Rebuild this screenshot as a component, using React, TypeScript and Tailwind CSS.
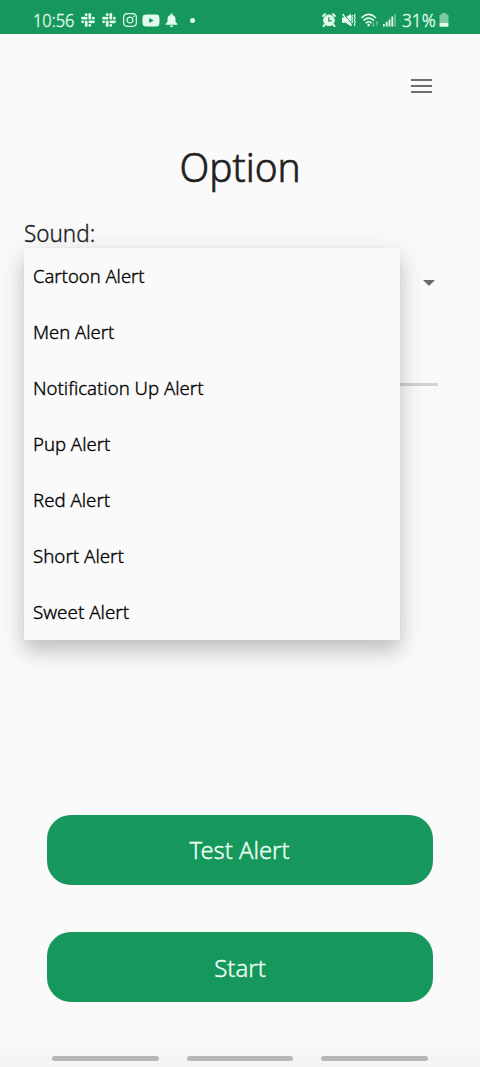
import React from "react";
import { FaInstagram, FaYoutube } from "react-icons/fa";

const alerts = [
  { name: "Cartoon Alert", scale: "scale-x-[0.97]" },
  { name: "Men Alert", scale: "scale-x-[0.97]" },
  { name: "Notification Up Alert", scale: "scale-x-[0.978]" },
  { name: "Pup Alert", scale: "scale-x-[0.975]" },
  { name: "Red Alert", scale: "scale-x-[0.98]" },
  { name: "Short Alert", scale: "scale-x-[0.985]" },
  { name: "Sweet Alert", scale: "scale-x-[0.99]" },
];

function Slack() {
  return (
    <svg viewBox="0 0 14 14" className="h-[14px] w-[14px]" fill="none" stroke="currentColor" strokeWidth="2.8" strokeLinecap="round">
      <path d="M5.2 5.2H1.5M5.2 1.6v.1M8.8 1.5v3.7M12.3 5.2h.1M8.8 8.8h3.7M8.8 12.3v.1M5.2 12.5V8.8M1.6 8.8h.1" />
    </svg>
  );
}

function Alarm() {
  return (
    <svg viewBox="0 0 14 14" className="h-[14px] w-[14px]" fill="none" stroke="currentColor" strokeLinecap="round">
      <circle cx="7" cy="7.3" r="5.4" fill="currentColor" />
      <path d="M1.1 3 3 1.1M12.9 3 11 1.1M2.6 11.8l-1 1.3M11.4 11.8l1 1.3" strokeWidth="2" />
      <path d="M6.8 4.6v3.2h2.6" stroke="#16985c" strokeWidth="1.2" />
    </svg>
  );
}

function Muted() {
  return (
    <svg viewBox="0 0 14 14" className="h-[14px] w-[14px]" fill="currentColor">
      <path d="M0 4.5h3.5L9 .8v12.4L3.5 9.8H0z" />
      <path d="M1.2.4 11 12" stroke="#16985c" strokeWidth="1" />
      <path d="M.5 1 9.6 12.6" stroke="currentColor" strokeWidth="1.5" />
      <path d="m10.6 2-.9 1.7.9 1.6-.9 1.7.9 1.6-.9 1.7M13.2 1l-.9 2 .9 2-.9 2 .9 2-.9 2 .9 2" fill="none" stroke="currentColor" strokeWidth="1.1" />
    </svg>
  );
}

function Wifi() {
  return (
    <svg viewBox="0 0 18 14" className="h-[14px] w-[18px]" fill="none" stroke="currentColor" strokeWidth="1.6" strokeLinecap="round">
      <path d="M.9 4.5q6.8-6.3 13.6 0M3 7.2q4.7-4.2 9.4 0M5.3 9.8q2.4-2.1 4.8 0" />
      <circle cx="7.7" cy="12.1" r="1.3" fill="currentColor" stroke="none" />
      <path d="M12.5 9.5V13m0 0-1-1m1 1 1-1M16 12.5V9m0 0-1 1m1-1 1 1" strokeWidth="1" opacity=".4" />
    </svg>
  );
}

function Signal() {
  return (
    <svg viewBox="0 0 13 14" className="h-[14px] w-[13px]" fill="currentColor">
      <path d="M0 11h1.8v2.5H0zM2.8 8.8h1.8v4.7H2.8zM5.6 6.4h1.8v7.1H5.6zM8.4 3.6h1.8v9.9H8.4z" />
      <path d="M11.1 1h1.8v12.5h-1.8z" opacity=".4" />
    </svg>
  );
}

function Bell() {
  return (
    <svg viewBox="0 0 13 15" className="h-[15px] w-[13px]" fill="currentColor">
      <path d="M6.5.3a1 1 0 0 1 1 1v.6c2 .5 3 2 3 4v2.8l2 2.2v.8H.5v-.8l2-2.2V5.9c0-2 1-3.5 3-4v-.6a1 1 0 0 1 1-1zM4.9 12.6h3.2a1.6 1.6 0 0 1-3.2 0z" />
    </svg>
  );
}

function Battery() {
  return (
    <svg viewBox="0 0 10 14" className="h-[14px] w-[10px]" fill="currentColor">
      <path d="M3 0h4v1.5h1.5a1 1 0 0 1 1 1V10h-9V2.5a1 1 0 0 1 1-1H3z" opacity=".5" />
      <path d="M.5 10h9v2.8a1 1 0 0 1-1 1h-7a1 1 0 0 1-1-1z" />
    </svg>
  );
}

function StatusBar() {
  return (
    <header className="flex h-[33.5px] shrink-0 items-center bg-[#16985c] pt-[7px] text-[#e2fbec]">
      <div className="ml-[33px] w-[48px] text-[18px] leading-[26px]">
        <span className="inline-block origin-left scale-x-[0.91]">10:56</span>
      </div>
      <div className="flex items-center">
        <Slack />
        <span className="ml-[7px]"><Slack /></span>
        <FaInstagram className="ml-[6px] h-[16px] w-[16px]" />
        <FaYoutube className="ml-[4px] h-[17px] w-[18px]" />
        <span className="ml-[5px]"><Bell /></span>
        <span className="ml-[12px] h-[5px] w-[5px] rounded-full bg-current" />
      </div>
      <div className="mr-[31px] ml-auto flex items-center">
        <Alarm />
        <span className="ml-[6px]"><Muted /></span>
        <span className="ml-[5px]"><Wifi /></span>
        <span className="ml-[4px]"><Signal /></span>
        <div className="ml-[6px] w-[37px] text-[18px] leading-[26px]">
          <span className="inline-block origin-left scale-x-[0.96]">31%</span>
        </div>
        <Battery />
      </div>
    </header>
  );
}

export default function App() {
  return (
    <div className="flex h-[1067px] w-[480px] flex-col overflow-hidden bg-[#fafafa] font-['Noto_Sans',sans-serif] font-light text-[#212121] [-webkit-text-stroke:0.35px]">
      <StatusBar />
      <main className="flex flex-1 flex-col">
        <div className="flex justify-end pt-[45.5px] pr-[48px]">
          <button aria-label="Menu" className="flex w-[21px] flex-col gap-[4px]">
            <span className="h-[2px] bg-[#6e6e6e]" />
            <span className="h-[2px] bg-[#6e6e6e]" />
            <span className="h-[2px] bg-[#6e6e6e]" />
          </button>
        </div>
        <h1 className="mt-[49px] text-center text-[41px] leading-[48px] [-webkit-text-stroke:0.7px]">
          <span className="inline-block scale-x-[0.945]">Option</span>
        </h1>
        <section className="relative mt-[26.5px] h-[440px] pl-[23.5px]">
          <h2 className="text-[24px] leading-[31px]">
            <span className="inline-block origin-left scale-x-[0.935]">Sound:</span>
          </h2>
          <div className="mt-[32px] mr-[45px] flex justify-end">
            <svg viewBox="0 0 12 6" className="h-[6px] w-[12px]" fill="#6a6a6a"><path d="M0 0h12L6 6z" /></svg>
          </div>
          <div className="mt-[97px] mr-[42px] h-[3px] bg-[#d2d2d2]" />
          <ul className="absolute top-[31.5px] left-[23.5px] w-[376.5px] bg-[#fafafa] text-black shadow-[0_8px_28px_rgba(0,0,0,0.14),0_12px_16px_rgba(0,0,0,0.12),0_0_1px_rgba(0,0,0,0.1)]">
            {alerts.map((a) => (
              <li key={a.name} className="flex h-14 items-center pl-[9.5px] text-[19px]">
                <span className={"origin-left " + a.scale}>{a.name}</span>
              </li>
            ))}
          </ul>
        </section>
        <div className="mx-[47px] mt-auto mb-[47px] flex flex-col gap-[47.5px] text-[24px] text-[#effff5]">
          <button className="h-[70px] rounded-[24px] bg-[#16985c] pt-px">
            <span className="inline-block scale-x-[0.99]">Test Alert</span>
          </button>
          <button className="h-[70px] rounded-[24px] bg-[#16985c] pt-px">
            <span className="inline-block">Start</span>
          </button>
        </div>
      </main>
      <nav className="flex h-[18px] shrink-0 justify-center gap-[28px] bg-[#f5f5f5] pt-[6.5px]">
        <span className="h-[5px] w-[106.5px] rounded-full bg-[#b7b7b7]" />
        <span className="h-[5px] w-[106.5px] rounded-full bg-[#b7b7b7]" />
        <span className="h-[5px] w-[106.5px] rounded-full bg-[#b7b7b7]" />
      </nav>
    </div>
  );
}
